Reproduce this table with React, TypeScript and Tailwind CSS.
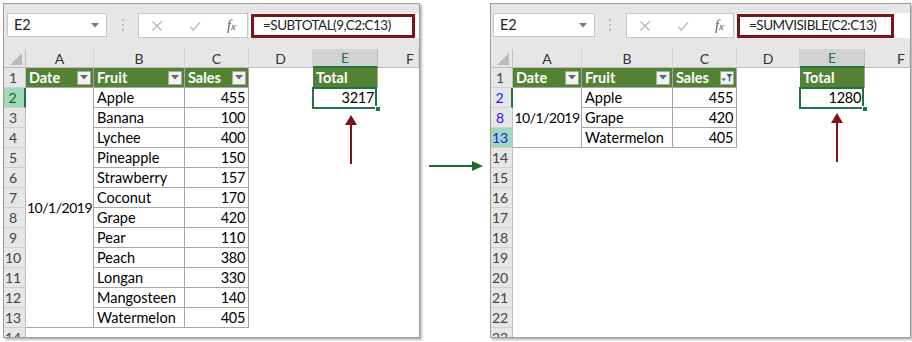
import React from 'react';

type DataRow = { n: number; fruit?: string; sales?: number; hdr?: string };

interface SheetProps {
  panelClass: string;
  gridClass: string;
  nameClass: string;
  dotsClass: string;
  fxClass: string;
  redClass: string;
  formula: string;
  total: number;
  rows: DataRow[];
  dateSpan: string;
  salesFiltered?: boolean;
  arrowClass: string;
}

const leftRows: DataRow[] = [
  { n: 2, fruit: 'Apple', sales: 455, hdr: 'sel' },
  { n: 3, fruit: 'Banana', sales: 100 },
  { n: 4, fruit: 'Lychee', sales: 400 },
  { n: 5, fruit: 'Pineapple', sales: 150 },
  { n: 6, fruit: 'Strawberry', sales: 157 },
  { n: 7, fruit: 'Coconut', sales: 170 },
  { n: 8, fruit: 'Grape', sales: 420 },
  { n: 9, fruit: 'Pear', sales: 110 },
  { n: 10, fruit: 'Peach', sales: 380 },
  { n: 11, fruit: 'Longan', sales: 330 },
  { n: 12, fruit: 'Mangosteen', sales: 140 },
  { n: 13, fruit: 'Watermelon', sales: 405 },
  { n: 14 },
];

const rightRows: DataRow[] = [
  { n: 2, fruit: 'Apple', sales: 455, hdr: 'blueline' },
  { n: 8, fruit: 'Grape', sales: 420, hdr: 'blue' },
  { n: 13, fruit: 'Watermelon', sales: 405, hdr: 'bluesel' },
  ...[14, 15, 16, 17, 18, 19, 20, 21, 22, 23].map((n) => ({ n })),
];

const rowHead = 'flex items-center justify-center pr-[3px] border-b border-[#cfcfcf] text-[14px]';
const colHead = 'flex items-center justify-center border-r border-b border-r-[#d4d4d4] border-b-[#bdbdbd] bg-[#e6e6e6] text-[14px] text-[#333]';
const tableCell = 'flex items-center border-r border-b border-[#a6a6a6] text-[14.5px] text-black';
const greenCell = 'flex items-center justify-between border-r border-b border-[#a6a6a6] bg-[#548235] pl-[3px] pr-[2px] text-[14.5px] font-bold text-white';

function rowHeadClass(hdr?: string) {
  if (hdr === 'sel') return 'bg-[#a0d8b8] text-[#1e5c36] border-r-2 border-r-[#217346]';
  if (hdr === 'blueline') return 'bg-[#e6e6e6] text-[#1a1aff] border-r-2 border-r-[#217346]';
  if (hdr === 'blue') return 'bg-[#e6e6e6] text-[#1a1aff] border-r border-r-[#bdbdbd]';
  if (hdr === 'bluesel') return 'bg-[#a0d8b8] text-[#1a1aff] border-r border-r-[#bdbdbd]';
  return 'bg-[#e6e6e6] text-[#444] border-r border-r-[#bdbdbd]';
}

function Dropdown({ filtered }: { filtered?: boolean }) {
  return (
    <span className="flex h-[14px] w-[14px] items-center justify-center border border-[#a6a6a6] bg-[#f3f3f3]">
      {filtered ? (
        <svg width="12" height="10" viewBox="0 0 12 10">
          <path d="M0.5 5.5h4.5l-2.25 2.5z" fill="#595959" />
          <path d="M5.5 1h6l-2.4 3.2v4.6l-1.3-0.9v-3.7z" fill="#595959" />
        </svg>
      ) : (
        <svg width="8" height="5" viewBox="0 0 8 5">
          <path d="M0 0h8L4 4.5z" fill="#666" />
        </svg>
      )}
    </span>
  );
}

function FormulaBar({ nameClass, dotsClass, fxClass, redClass, formula }: Pick<SheetProps, 'nameClass' | 'dotsClass' | 'fxClass' | 'redClass' | 'formula'>) {
  return (
    <div className="flex h-[45px] items-start bg-[#e6e6e6] pt-[9px]">
      <div className={`flex h-[24px] items-center justify-between border border-[#c6c6c6] bg-white pl-[6px] pr-[7px] text-[14.5px] text-[#222] ${nameClass}`}>
        <span>E2</span>
        <svg width="8" height="5" viewBox="0 0 8 5">
          <path d="M0 0h8L4 4.5z" fill="#7a7a7a" />
        </svg>
      </div>
      <div className={`flex h-[24px] flex-col items-center justify-center gap-[3px] ${dotsClass}`}>
        <span className="h-[2px] w-[2px] bg-[#b8b8b8]" />
        <span className="h-[2px] w-[2px] bg-[#b8b8b8]" />
        <span className="h-[2px] w-[2px] bg-[#b8b8b8]" />
      </div>
      <div className={`flex h-[25px] items-center gap-[26px] border border-[#c6c6c6] bg-white pl-[12px] ${fxClass}`}>
        <svg width="12" height="12" viewBox="0 0 12 12">
          <path d="M1.5 1.5l9 9M10.5 1.5l-9 9" stroke="#b3b3b3" strokeWidth="1.3" fill="none" />
        </svg>
        <svg width="12" height="12" viewBox="0 0 12 12">
          <path d="M1 6.5l3.2 3.5L11 2.5" stroke="#c2c2c2" strokeWidth="1.6" fill="none" />
        </svg>
        <span className="w-[12px] font-['Liberation_Serif',serif] text-[14px] italic leading-none text-[#555]">
          f<span className="text-[11px]">x</span>
        </span>
      </div>
      <div className="ml-px flex h-[25px] flex-1 items-center bg-white pl-[2px]">
        <div className={`flex h-[24px] items-center whitespace-nowrap border-[3px] border-[#7b1416] pl-[9px] text-[13.5px] tracking-[-0.5px] text-[#222] ${redClass}`}>
          {formula}
        </div>
      </div>
    </div>
  );
}

function Sheet(props: SheetProps) {
  const { rows, total, gridClass, dateSpan, salesFiltered } = props;
  return (
    <div className={`relative h-[335px] shrink-0 overflow-hidden border border-[#9c9c9c] bg-white shadow-[2px_2px_2px_rgba(0,0,0,0.28)] ${props.panelClass}`}>
      <FormulaBar {...props} />
      <div className={`grid ${gridClass}`}>
        {/* column letters */}
        <div className="relative border-r border-b border-r-[#bdbdbd] border-b-[#bdbdbd] bg-[#e6e6e6]">
          <svg className="absolute bottom-[2px] right-[3px]" width="12" height="12" viewBox="0 0 12 12">
            <path d="M12 0v12H0z" fill="#b9b9b9" />
          </svg>
        </div>
        {['A', 'B', 'C', 'D'].map((c) => (
          <div key={c} className={colHead}>{c}</div>
        ))}
        <div className="flex items-center justify-center border-r border-b-2 border-r-[#bdbdbd] border-b-[#217346] bg-[#d2d2d2] text-[14px] text-[#217346]">E</div>
        <div className={`${colHead} justify-end pr-[4px]`}>F</div>

        {/* row 1 */}
        <div className={`${rowHead} ${rowHeadClass()} ${salesFiltered ? 'text-[#8a4b1c]' : ''}`}>1</div>
        <div className={greenCell}>Date<Dropdown /></div>
        <div className={greenCell}>Fruit<Dropdown /></div>
        <div className={greenCell}>Sales<Dropdown filtered={salesFiltered} /></div>
        <div />
        <div className="flex items-center border-r border-[#a6a6a6] bg-[#548235] pl-[3px] text-[14.5px] font-bold text-white">Total</div>
        <div />

        {rows.map((r, i) => (
          <React.Fragment key={r.n}>
            <div className={`${rowHead} ${rowHeadClass(r.hdr)}`}>{r.n}</div>
            {i === 0 && (
              <div className={`${tableCell} justify-center !text-[14px] tracking-[-0.5px] ${dateSpan}`}>10/1/2019</div>
            )}
            {r.fruit ? (
              <>
                <div className={`${tableCell} pl-[3px]`}>{r.fruit}</div>
                <div className={`${tableCell} justify-end pr-[3px] tracking-[-0.3px]`}>{r.sales}</div>
              </>
            ) : (
              <>
                <div />
                <div />
                <div />
              </>
            )}
            <div />
            {i === 0 ? (
              <div className="relative flex items-center justify-end pr-[4px] text-[14.5px] tracking-[-0.3px] text-black">
                <span className="absolute -left-px -top-px h-[22px] w-[65px] border-2 border-[#217346]" />
                <span className="absolute -bottom-[4px] -right-[3px] h-[6px] w-[6px] border border-white bg-[#217346]" />
                {total}
              </div>
            ) : (
              <div />
            )}
            <div />
          </React.Fragment>
        ))}
      </div>
      <svg className={`absolute ${props.arrowClass}`} width="12" height="49" viewBox="0 0 12 49">
        <path d="M6 0L12 10H0z" fill="#7b1416" />
        <rect x="5" y="9" width="2" height="40" fill="#7b1416" />
      </svg>
    </div>
  );
}

export default function App() {
  return (
    <div className="flex h-[342px] w-[912px] bg-white pl-[3px] pt-[3px] font-[Lato,sans-serif]">
      <Sheet
        panelClass="w-[417px]"
        gridClass="grid-cols-[22px_68px_91px_64px_64px_65px_1fr] grid-rows-[19px_repeat(14,20px)]"
        nameClass="ml-[3px] w-[100px]"
        dotsClass="ml-[15px] w-[2px]"
        fxClass="ml-[14px] w-[110px]"
        redClass="w-[164px]"
        formula="=SUBTOTAL(9,C2:C13)"
        total={3217}
        rows={leftRows}
        dateSpan="row-span-12"
        arrowClass="left-[341px] top-[111px]"
      />
      <div className="w-[70px] shrink-0 pl-[9px] pt-[157px]">
        <svg width="54" height="12" viewBox="0 0 54 12">
          <rect x="0" y="5" width="44" height="2" fill="#22692f" />
          <path d="M43 1L54 6L43 11z" fill="#22692f" />
        </svg>
      </div>
      <Sheet
        panelClass="w-[421px]"
        gridClass="grid-cols-[22px_69px_91px_64px_63px_65px_1fr] grid-rows-[19px_repeat(14,20px)]"
        nameClass="ml-[2px] w-[102px]"
        dotsClass="ml-[14px] w-[2px]"
        fxClass="ml-[15px] w-[108px]"
        redClass="w-[157px]"
        formula="=SUMVISIBLE(C2:C13)"
        total={1280}
        rows={rightRows}
        dateSpan="row-span-3"
        salesFiltered
        arrowClass="left-[340px] top-[109px]"
      />
    </div>
  );
}
